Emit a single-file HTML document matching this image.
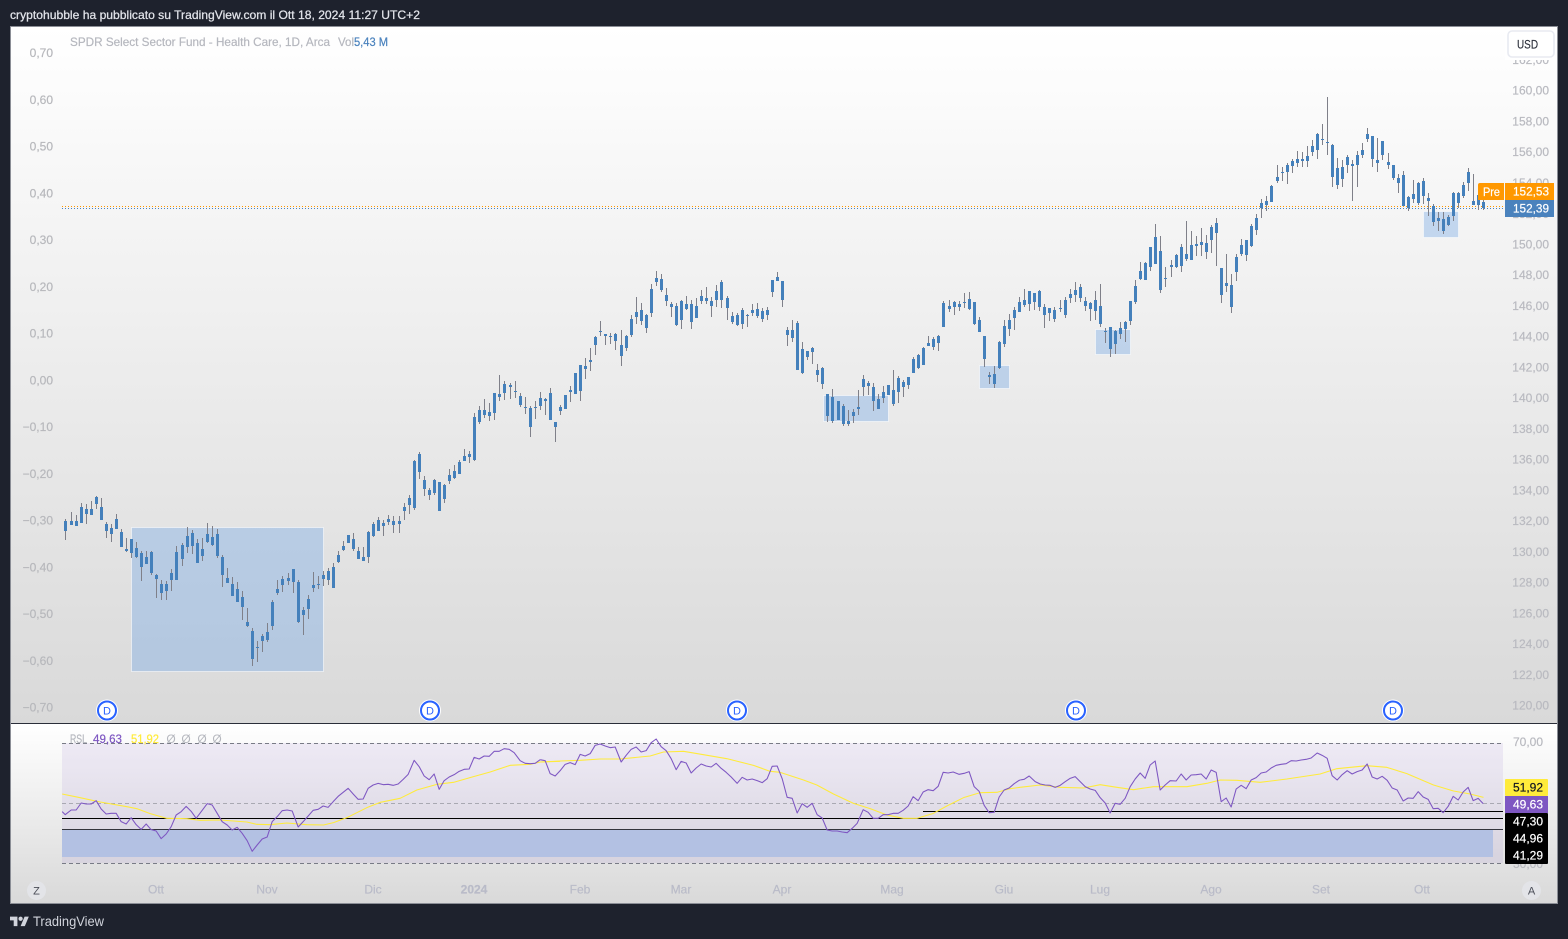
<!DOCTYPE html>
<html lang="it">
<head>
<meta charset="utf-8">
<title>SPDR Select Sector Fund - Health Care</title>
<style>
html,body{margin:0;padding:0;background:#1e222d;width:1568px;height:939px;overflow:hidden}
svg{display:block}
text{font-family:"Liberation Sans",sans-serif}
.l text{font-size:12px;fill:#b7b8bc;stroke:#b7b8bc;stroke-width:.2}
.r text{font-size:12px;fill:#b9bac0;stroke:#b9bac0;stroke-width:.2;text-anchor:end}
.x text{font-size:12px;fill:#b9bbc8;stroke:#b9bbc8;stroke-width:.2;text-anchor:middle}
.w{fill:none;stroke:#7f8089;stroke-width:3}
.b{fill:none;stroke:#4480bb;stroke-width:9.4}
.d text{font-size:11px;fill:#2962ff;text-anchor:middle}
.d circle{fill:#fff;stroke:#2962ff;stroke-width:2}
</style>
</head>
<body>
<svg width="1568" height="939" viewBox="0 0 1568 939" xmlns="http://www.w3.org/2000/svg">
<defs>
<linearGradient id="g1" x1="0" y1="0" x2="0" y2="1"><stop offset="0" stop-color="#ffffff"/><stop offset="1" stop-color="#d9d9d9"/></linearGradient>
</defs>
<rect width="1568" height="939" fill="#1e222d"/>
<text x="10" y="19" font-size="12" fill="#e2e4ea" stroke="#e2e4ea" stroke-width=".25" textLength="410" lengthAdjust="spacingAndGlyphs">cryptohubble ha pubblicato su TradingView.com il Ott 18, 2024 11:27 UTC+2</text>

<!-- panel -->
<rect x="10.5" y="26.5" width="1547" height="877" fill="#fff" stroke="#8b8e96"/>
<rect x="11" y="27" width="1546" height="696" fill="url(#g1)"/>
<rect x="11" y="724" width="1546" height="179" fill="url(#g1)"/>
<rect x="11" y="723" width="1546" height="1" fill="#2a2e39"/>

<!-- left axis -->
<g class="l" text-anchor="end">
<text x="53" y="57">0,70</text><text x="53" y="103.75">0,60</text><text x="53" y="150.5">0,50</text><text x="53" y="197.25">0,40</text><text x="53" y="244">0,30</text><text x="53" y="290.75">0,20</text><text x="53" y="337.5">0,10</text><text x="53" y="384.25">0,00</text><text x="53" y="431">−0,10</text><text x="53" y="477.75">−0,20</text><text x="53" y="524.5">−0,30</text><text x="53" y="571.25">−0,40</text><text x="53" y="618">−0,50</text><text x="53" y="664.75">−0,60</text><text x="53" y="711.5">−0,70</text>
</g>

<!-- right axis -->
<g class="r">
<text x="1549" y="63.75">162,00</text><text x="1549" y="94.5">160,00</text><text x="1549" y="125.25">158,00</text><text x="1549" y="156">156,00</text><text x="1549" y="186.75">154,00</text><text x="1549" y="218">152,00</text><text x="1549" y="248.25">150,00</text><text x="1549" y="279">148,00</text><text x="1549" y="309.75">146,00</text><text x="1549" y="340.5">144,00</text><text x="1549" y="371.25">142,00</text><text x="1549" y="402">140,00</text><text x="1549" y="432.75">138,00</text><text x="1549" y="463.5">136,00</text><text x="1549" y="494.25">134,00</text><text x="1549" y="525">132,00</text><text x="1549" y="555.75">130,00</text><text x="1549" y="586.5">128,00</text><text x="1549" y="617.25">126,00</text><text x="1549" y="648">124,00</text><text x="1549" y="678.75">122,00</text><text x="1549" y="709.5">120,00</text>
<text x="1543" y="746">70,00</text><text x="1543" y="868">30,00</text>
</g>

<!-- boxes -->
<g fill="#78aae6" fill-opacity=".4" stroke="#fff" stroke-opacity=".55" shape-rendering="crispEdges">
<rect x="131.5" y="527.5" width="192" height="144"/>
<rect x="823.5" y="395.5" width="65" height="26"/>
<rect x="979.5" y="365.5" width="30" height="23"/>
<rect x="1095.5" y="329.5" width="35" height="25"/>
<rect x="1423.5" y="211.5" width="35" height="26"/>
</g>

<!-- dotted price lines -->
<path d="M62 206.5H1503" stroke="#ff9800" stroke-dasharray="1 2" shape-rendering="crispEdges"/>
<path d="M62 208.5H1503" stroke="#4a82bd" stroke-dasharray="1 2" shape-rendering="crispEdges"/>

<!-- candles -->
<g shape-rendering="crispEdges">
<g transform="translate(60.17,480) scale(.33333)">
<path class="w" d="M16 117V180M34 96V135M49 105V138M64 69V129M79 72V132M94 63V105M109 48V87M124 54V120M139 126V174M154 132V186M169 102V147M184 147V201M199 174V216M214 177V234M229 186V234M244 213V303M259 213V252M274 213V285M289 282V354M304 300V360M319 303V360M334 267V333M349 198V300M367 189V258M382 141V219M397 150V222M412 177V249M427 174V243M442 129V189M457 138V198M472 147V234M487 225V321M502 264V309M517 291V348M532 306V366M547 333V420M562 384V441M577 444V558M592 483V546M607 462V516M622 429V486M637 360V450M652 300V345M667 288V336M685 279V315M700 267V339M715 300V429M730 381V465M745 345V417M760 276V336M775 288V327M790 273V318M805 264V315M820 249V324M835 213V249M850 183V213M865 165V189M880 159V213M895 201V237"/>
<path class="b" d="M16 123V153M34 123V135M49 123V138M64 81V129M79 87V102M94 87V105M109 51V72M124 81V120M139 132V153M154 144V162M169 117V147M184 156V201M199 207V213M214 177V219M229 204V231M244 219V261M259 231V252M274 216V279M289 285V297M304 312V339M319 312V333M334 279V300M349 216V300M367 195V237M382 168V201M397 159V198M412 189V249M427 207V228M442 162V186M457 171V195M472 162V228M487 231V285M502 294V309M517 312V348M532 327V366M547 351V381M562 426V438M577 453V537M592 501V504M607 468V483M622 456V480M637 366V438M652 327V339M667 297V315M685 294V303M700 267V306M715 306V426M730 390V405M745 357V387M760 315V324M775 312V315M790 285V297M805 273V300M820 261V324M835 225V246M850 198V210M865 165V189M880 177V207M895 213V237"/>
</g>
<g transform="translate(340.17,510) scale(.33333)">
<path class="w" d="M70 111V153M85 63V159"/>
<path class="b" d="M70 141V153M85 66V141"/>
</g>
<g transform="translate(350.17,260) scale(.33333)">
<path class="w" d="M70 786V831M85 771V813M100 780V828M115 765V795M130 768V819M148 768V819M163 729V780M178 705V762M193 600V750M208 576V657M223 648V708M238 684V720M253 657V705M268 666V753M283 672V729M298 627V672M313 615V657M328 600V642M343 567V603M358 573V609M373 459V603M388 438V492M403 417V474M418 429V483M433 399V480M448 345V423M463 363V420M481 369V417M496 363V414M511 399V441M526 411V462M541 438V531M556 423V477M571 396V450M586 414V465M601 384V480M616 486V546M631 435V465M646 405V447M661 378V426M676 339V402M691 315V423M706 294V357M721 264V333M736 228V285M751 183V228M766 222V255M781 219V252M796 219V270M814 210V318M829 225V273M844 165V231M859 111V192M874 129V195M889 162V219M904 72V171M919 33V78M934 42V96M949 84V138M964 126V171M979 129V198M994 120V207M1009 108V150M1024 120V207M1039 114V174M1054 90V132M1069 81V132M1084 111V171M1099 75V141M1114 60V144M1132 108V180M1147 156V192M1162 159V198M1177 144V207M1192 162V201M1207 132V168M1222 129V174M1237 144V186M1252 141V180M1267 60V111M1282 36V63"/>
<path class="b" d="M70 792V828M85 780V813M100 789V798M115 777V786M130 783V795M148 783V792M163 741V753M178 714V735M193 603V744M208 582V636M223 660V687M238 690V705M253 660V699M268 666V753M283 675V717M298 645V663M313 633V654M328 606V642M343 588V603M358 582V591M373 471V600M388 450V486M403 450V465M418 456V468M433 399V459M448 402V411M463 372V399M481 375V381M496 393V396M511 408V435M526 441V444M541 444V501M556 441V444M571 414V438M586 417V423M601 399V480M616 486V501M631 441V453M646 405V447M661 390V396M676 339V402M691 315V393M706 318V327M721 300V306M736 231V255M751 213V216M766 222V228M781 228V231M796 222V243M814 255V288M829 228V264M844 177V225M859 156V171M874 150V183M889 165V204M904 87V159M919 54V66M934 57V90M949 105V123M964 132V141M979 138V195M994 123V180M1009 132V147M1024 132V186M1039 138V174M1054 108V123M1069 114V123M1084 123V138M1099 93V120M1114 66V120M1132 114V144M1147 168V186M1162 165V195M1177 150V192M1192 165V168M1207 150V159M1222 147V168M1237 153V177M1252 150V165M1267 60V96M1282 51V63"/>
</g>
<g transform="translate(780.17,200) scale(.33333)">
<path class="w" d="M7 243V321M22 381V438M37 360V426M52 363V510M67 426V522M82 453V480M97 441V492M112 492V546M127 501V567M142 582V666M157 567V669M175 603V660M190 612V678M205 630V678M220 627V669M235 570V645M250 525V588M265 543V585M280 549V633M295 582V627M310 558V609M325 555V585M340 510V618M355 528V609M370 540V591M385 531V567M400 471V519M415 462V507M430 441V495M445 408V438M460 411V450M475 405V453M490 303V381M508 300V336M523 303V345M538 303V333M553 279V324M568 276V330M583 306V375M598 351V396M613 408V501M628 516V552M643 498V564M658 423V507M673 360V441M688 342V408M703 321V390M718 291V336M733 267V321M748 273V333M763 279V330M778 270V333M793 312V384M808 324V363M823 321V366M841 300V336M856 291V354M871 267V309M886 246V306M901 252V306M916 291V333M931 306V363M946 273V360M961 252V381M976 384V429M991 381V471M1006 390V462M1021 366V417M1036 363V426M1051 303V375"/>
<path class="b" d="M7 243V300M22 390V405M37 390V414M52 369V510M67 447V519M82 453V471M97 444V456M112 510V525M127 504V552M142 582V648M157 591V663M175 603V660M190 618V672M205 663V672M220 636V648M235 621V627M250 537V561M265 549V558M280 561V603M295 597V627M310 576V594M325 555V585M340 570V612M355 534V576M370 546V561M385 531V555M400 477V519M415 465V504M430 444V495M445 429V438M460 417V441M475 408V429M490 309V381M508 318V327M523 306V321M538 312V321M553 306V309M568 297V327M583 306V372M598 360V396M613 408V477M628 525V531M643 522V552M658 426V504M673 378V432M688 360V387M703 330V354M718 306V336M733 300V315M748 273V312M763 279V306M778 273V321M793 321V345M808 324V339M823 330V357M841 324V327M856 300V345M871 282V294M886 270V285M901 261V294M916 303V318M931 309V327M946 300V333M961 318V372M976 393V396M991 381V447M1006 393V432M1021 384V402M1036 366V387M1051 303V363"/>
</g>
<g transform="translate(1130.17,90) scale(.33333)">
<path class="w" d="M16 570V642M31 516V570M46 516V570M61 471V543M76 402V522M91 438V609M106 531V591M124 510V561M139 492V534M154 462V546M169 393V513M184 423V510M199 438V498M214 414V498M229 435V507M244 405V489M259 384V528M274 534V639M289 492V606M304 552V669M319 492V573M334 447V498M349 450V513M364 402V471M379 372V435M394 327V384M409 318V363M424 285V336M442 225V279M457 231V273M472 219V282M487 207V249M502 183V231M517 186V231M532 168V231M547 150V198M562 129V207M577 102V165M592 21V195M607 162V291M622 204V297M637 210V291M652 195V249M667 210V333M682 183V291M697 159V204M712 114V156M727 138V231M742 144V246M757 153V210M775 189V237M790 225V270M805 252V309M820 243V348M835 318V363M850 270V339M865 276V345M880 264V342M895 309V378M910 342V408M925 366V423M940 366V432M955 375V408M970 306V393M985 306V354M1000 276V324M1015 234V303M1030 252V345M1045 312V360M1060 330V360"/>
<path class="b" d="M16 588V636M31 543V567M46 519V570M61 471V531M76 441V522M91 483V600M106 564V567M124 525V531M139 495V531M154 471V528M169 492V507M184 465V510M199 462V468M214 456V465M229 459V486M244 411V450M259 399V429M274 534V615M289 579V588M304 585V651M319 501V546M334 465V492M349 450V495M364 408V468M379 384V420M394 339V354M409 333V345M424 288V336M442 261V273M457 246V249M472 225V246M487 213V228M502 207V219M517 207V213M532 198V213M547 168V186M562 132V180M577 147V150M592 156V159M607 165V261M622 234V285M637 231V267M652 201V225M667 222V228M682 195V225M697 180V195M712 132V147M727 138V207M742 210V219M757 153V195M775 216V225M790 225V264M805 264V279M820 255V348M835 321V354M850 312V327M865 279V339M880 273V318M895 324V333M910 348V396M925 384V393M940 387V423M955 381V405M970 309V378M985 309V339M1000 285V318M1015 246V279M1030 333V345M1045 315V345M1060 336V354"/>
</g>
</g>

<!-- D events -->
<g class="d">
<circle cx="107" cy="710.5" r="11" style="stroke:none"/><circle cx="107" cy="710.5" r="9"/><text x="107" y="714.5">D</text>
<circle cx="430" cy="710.5" r="11" style="stroke:none"/><circle cx="430" cy="710.5" r="9"/><text x="430" y="714.5">D</text>
<circle cx="737" cy="710.5" r="11" style="stroke:none"/><circle cx="737" cy="710.5" r="9"/><text x="737" y="714.5">D</text>
<circle cx="1076" cy="710.5" r="11" style="stroke:none"/><circle cx="1076" cy="710.5" r="9"/><text x="1076" y="714.5">D</text>
<circle cx="1393" cy="710.5" r="11" style="stroke:none"/><circle cx="1393" cy="710.5" r="9"/><text x="1393" y="714.5">D</text>
</g>

<!-- header -->
<text x="70" y="46" font-size="12" fill="#b5b7be" stroke="#b5b7be" stroke-width=".2" textLength="260" lengthAdjust="spacingAndGlyphs">SPDR Select Sector Fund - Health Care, 1D, Arca</text>
<text x="338" y="46" font-size="12" fill="#b5b7be" stroke="#b5b7be" stroke-width=".2" textLength="16" lengthAdjust="spacingAndGlyphs">Vol</text>
<text x="354" y="46" font-size="12" fill="#4a82bd" stroke="#4a82bd" stroke-width=".2" textLength="34" lengthAdjust="spacingAndGlyphs">5,43 M</text>

<!-- USD button -->
<rect x="1505" y="28" width="52" height="32" fill="#fff"/>
<rect x="1508" y="31" width="46" height="26" rx="4" fill="#fff" stroke="#e8eaf1" stroke-width="1.6"/>
<text x="1517" y="48.5" font-size="12" fill="#2a2e39" stroke="#2a2e39" stroke-width=".15" textLength="21" lengthAdjust="spacingAndGlyphs">USD</text>

<!-- price labels -->
<path d="M1480 183h24v17h-26v-15a2 2 0 0 1 2-2z" fill="#ff9800"/>
<rect x="1505" y="183" width="49" height="17" fill="#ff9800"/>
<rect x="1505" y="200" width="49" height="17" fill="#4a82bd"/>
<text x="1483" y="196" font-size="12" fill="#fff" stroke="#fff" stroke-width=".2" textLength="17" lengthAdjust="spacingAndGlyphs">Pre</text>
<text x="1513" y="195.5" font-size="12" fill="#fff" stroke="#fff" stroke-width=".2" textLength="36" lengthAdjust="spacingAndGlyphs">152,53</text>
<text x="1513" y="212.5" font-size="12" fill="#fff" stroke="#fff" stroke-width=".2" textLength="36" lengthAdjust="spacingAndGlyphs">152,39</text>

<!-- RSI pane -->
<rect x="62" y="743" width="1441" height="120" fill="#7e57c2" fill-opacity=".1"/>
<rect x="62" y="829.5" width="1431" height="27.5" fill="#b3c1e3"/>
<path d="M62 743.5H1503M62 863.5H1503" stroke="#787b86" stroke-dasharray="4 3" shape-rendering="crispEdges"/>
<path d="M62 803.5H1503" stroke="#a9a9b2" stroke-dasharray="4 3" shape-rendering="crispEdges"/>
<path d="M62 818.5H1503" stroke="#000" shape-rendering="crispEdges"/>
<path d="M923 811.5H1503" stroke="#000" shape-rendering="crispEdges"/>
<path d="M62 829.5H1503" stroke="#33343c" shape-rendering="crispEdges"/>

<g fill="none" stroke-linejoin="round">
<g transform="translate(60.17,730) scale(.33333)">
<polyline stroke="#ffeb3b" stroke-width="3.2" points="6,192 60,203 120,216 200,230 230,236 270,251 320,265 380,266 420,271 480,270 560,276 590,283 630,284 680,279 740,284 790,285 820,278 860,263 920,233 960,217 1020,205 1070,180 1130,163 1180,157 1240,140 1290,126 1350,106 1410,103 1440,96 1500,94"/>
<polyline stroke="#7e57c2" stroke-width="3.2" points="6,245 15,254 33,240 48,240 63,219 78,222 93,222 108,212 123,237 138,252 153,250 168,250 183,275 198,282 213,263 228,284 243,298 258,282 273,299 288,303 303,326 318,312 333,290 348,255 363,245 378,229 393,244 408,265 423,245 441,221 456,225 471,250 486,275 501,285 516,300 531,292 546,310 561,332 576,364 591,345 606,327 621,321 636,275 651,260 666,242 681,240 696,243 714,291 729,275 744,258 759,241 774,238 789,228 804,232 819,215 834,199 849,187 864,175 879,192 894,208 909,207 924,175 939,165 954,160 969,164 984,163 999,166 1014,162 1029,148 1044,133 1062,91 1077,110 1092,138 1107,149 1122,132 1137,178 1152,152 1167,141 1182,134 1197,124 1212,118 1227,117 1242,82 1257,87 1272,78 1287,79 1302,64 1317,64 1332,56 1347,58 1362,68 1380,92 1395,100 1410,101 1425,100 1440,89"/>
</g>
<g transform="translate(540.17,730) scale(.33333)">
<polyline stroke="#ffeb3b" stroke-width="3.2" points="0,96 60,93 120,91 180,87 240,87 330,78 370,66 430,64 490,74 560,86 640,106 690,124 720,127 790,150 830,165 880,192 940,220 990,236 1040,255 1090,265 1130,265 1180,250 1220,228 1270,203 1320,188 1370,187 1410,176 1440,172"/>
<polyline stroke="#7e57c2" stroke-width="3.2" points="0,89 15,92 30,131 45,138 60,122 75,103 90,98 105,104 120,73 135,78 150,71 165,46 180,42 195,48 210,53 225,51 243,96 258,76 273,58 288,51 303,66 318,62 333,38 348,27 363,50 378,62 393,86 408,119 423,94 438,99 453,129 468,114 483,102 498,108 513,111 528,100 543,115 558,127 573,141 591,160 606,142 621,150 636,147 651,152 666,158 681,146 696,109 711,108 726,146 741,202 756,205 771,249 786,221 801,232 816,220 831,254 846,264 861,300 876,303 891,303 906,306 921,308 936,295 951,280 969,239 984,247 999,265 1014,265 1029,254 1044,254 1059,250 1074,250 1089,241 1104,228 1119,200 1134,212 1149,186 1164,179 1179,182 1194,169 1209,127 1224,129 1239,126 1257,133 1272,130 1287,125 1302,170 1317,184 1332,226 1347,248 1362,247 1377,201 1392,180 1407,174 1422,161 1437,151 1440,150"/>
</g>
<g transform="translate(1020.17,730) scale(.33333)">
<polyline stroke="#ffeb3b" stroke-width="3.2" points="0,172 60,165 120,172 190,174 240,164 290,172 340,179 400,170 500,170 560,160 600,150 650,151 720,157 800,147 900,132 950,116 1040,107 1100,112 1160,131 1240,165 1300,183 1350,192 1390,202"/>
<polyline stroke="#7e57c2" stroke-width="3.2" points="0,150 12,148 27,138 45,155 60,162 75,165 90,166 105,172 120,166 135,155 150,145 165,140 180,155 195,170 210,177 225,181 240,203 255,219 270,249 285,220 300,223 315,205 330,170 345,147 360,129 375,145 390,105 405,93 420,180 435,165 450,152 468,153 483,132 498,150 513,135 528,134 543,132 558,147 573,120 588,127 603,215 618,204 633,231 648,177 663,166 678,176 693,150 708,143 723,129 738,126 753,114 768,106 783,103 798,101 813,92 828,93 843,90 858,88 873,84 891,69 906,76 921,85 936,137 951,150 966,134 981,122 996,132 1011,125 1026,120 1041,102 1056,141 1071,147 1086,139 1101,151 1116,174 1131,180 1149,213 1164,204 1179,205 1194,185 1209,201 1224,208 1239,236 1254,235 1269,248 1284,229 1299,199 1314,210 1329,186 1344,172 1359,212 1374,205 1389,221"/>
</g>
</g>

<!-- RSI legend -->
<text x="70" y="743" font-size="12" fill="#b5b7be" stroke="#b5b7be" stroke-width=".2" textLength="17" lengthAdjust="spacingAndGlyphs">RSL</text>
<text x="93" y="743" font-size="12" fill="#7e57c2" stroke="#7e57c2" stroke-width=".2" textLength="29" lengthAdjust="spacingAndGlyphs">49,63</text>
<text x="131" y="743" font-size="12" fill="#ffeb3b" stroke="#ffeb3b" stroke-width=".2" textLength="28" lengthAdjust="spacingAndGlyphs">51,92</text>
<g font-size="12" fill="#b5b7be" text-anchor="middle"><text x="171" y="743">Ø</text><text x="186" y="743">Ø</text><text x="202" y="743">Ø</text><text x="217" y="743">Ø</text></g>

<!-- RSI labels -->
<rect x="1505" y="779" width="43" height="17" rx="1" fill="#ffeb3b"/>
<rect x="1505" y="796" width="43" height="17" fill="#7e57c2"/>
<rect x="1505" y="813" width="43" height="51" rx="1" fill="#000"/>
<g font-size="12" text-anchor="end" stroke-width=".2">
<text x="1543" y="791.5" fill="#131722" stroke="#131722">51,92</text>
<text x="1543" y="808.5" fill="#fff" stroke="#fff">49,63</text>
<text x="1543" y="825.5" fill="#fff" stroke="#fff">47,30</text>
<text x="1543" y="842.5" fill="#fff" stroke="#fff">44,96</text>
<text x="1543" y="859.5" fill="#fff" stroke="#fff">41,29</text>
</g>

<!-- time axis -->
<g class="x">
<text x="156" y="893.5">Ott</text><text x="267" y="893.5">Nov</text><text x="373" y="893.5">Dic</text><text x="474" y="893.5" font-weight="bold">2024</text><text x="580" y="893.5">Feb</text><text x="681" y="893.5">Mar</text><text x="782" y="893.5">Apr</text><text x="892" y="893.5">Mag</text><text x="1004" y="893.5">Giu</text><text x="1100" y="893.5">Lug</text><text x="1211" y="893.5">Ago</text><text x="1321" y="893.5">Set</text><text x="1422" y="893.5">Ott</text>
</g>
<circle cx="36.5" cy="890.5" r="9.5" fill="#e3e4e8"/>
<text x="36.5" y="894.5" font-size="11" fill="#4a4d57" text-anchor="middle">Z</text>
<circle cx="1531.5" cy="890.5" r="9.5" fill="#e3e4e8"/>
<text x="1531.5" y="894.5" font-size="11" fill="#4a4d57" text-anchor="middle">A</text>

<!-- footer logo -->
<g transform="translate(10,914.5) scale(.53)" fill="#d1d4dc">
<path d="M14 22H7V11H0V4h14v18zM28 22h-8l7.5-18h8L28 22z"/><circle cx="20" cy="8" r="4"/>
</g>
<text x="33" y="926" font-size="13.5" fill="#d1d4dc" textLength="71" lengthAdjust="spacingAndGlyphs">TradingView</text>
</svg>
</body>
</html>
